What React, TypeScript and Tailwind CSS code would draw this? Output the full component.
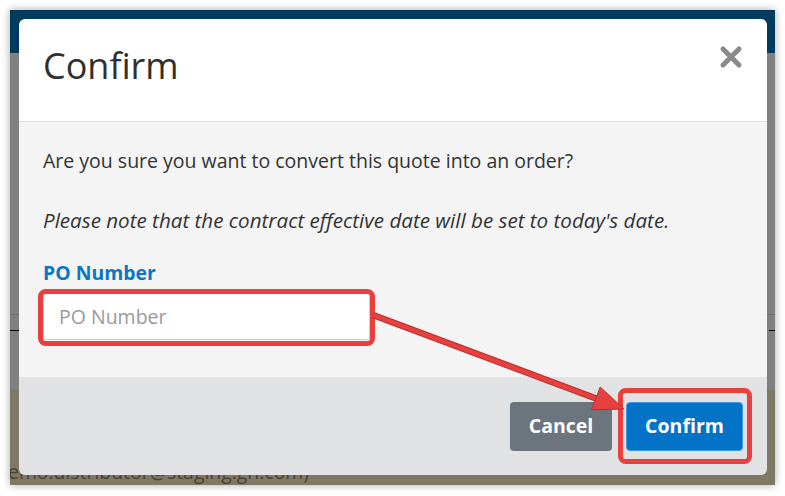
import React from "react";

const font = { fontFamily: '"Open Sans", "Liberation Sans", sans-serif' };

const CloseIcon = () => (
  <svg width="24" height="24" viewBox="0 0 24 24" className="block">
    <path d="M4 4 L20 20 M20 4 L4 20" stroke="#8a8a8a" strokeWidth="5" strokeLinecap="round" />
  </svg>
);

const Annotations = () => (
  <svg width="785" height="496" className="absolute left-0 top-0 pointer-events-none">
    <rect x="40.5" y="291.5" width="332" height="52" rx="5" fill="none" stroke="#e8403f" strokeWidth="5" />
    <rect x="620.5" y="390.5" width="129" height="71" rx="5" fill="none" stroke="#e8403f" strokeWidth="5" />
    <line x1="373" y1="315" x2="600" y2="400" stroke="#b83030" strokeWidth="6.5" />
    <line x1="373" y1="315" x2="600" y2="400" stroke="#e8403f" strokeWidth="4.5" />
    <polygon points="624,409 591.5,409.8 600.2,387" fill="#e8403f" stroke="#b83030" strokeWidth="1" strokeLinejoin="round" />
  </svg>
);

export default function App() {
  return (
    <div className="relative w-[785px] h-[496px] bg-white p-[10px] overflow-hidden" style={font}>
      <div className="relative w-[765px] h-[475px] overflow-hidden flex flex-col shadow-[0_0_8px_rgba(0,0,0,0.35)]">
        <div className="h-[43px] bg-[#003b5d]" />
        <div className="flex-1 bg-[#808080] flex flex-col">
          <div className="h-[261px]" />
          <div className="h-px bg-[#6e6e6e]" />
          <div className="h-[15px]" />
          <div className="flex justify-between">
            <div className="h-px w-[9px] bg-black" />
            <div className="h-px w-[6px] bg-black" />
          </div>
        </div>
        <div className="h-[95px] bg-[#7f7865] pt-[68px]">
          <p className="text-[19.4px] leading-[27px] text-[#4a4230] ml-[-2px] whitespace-nowrap">emo.distributor@staging.gn.com)</p>
        </div>

        <div className="absolute left-[9px] top-[9px] w-[748px] h-[456px] rounded-[6px] overflow-hidden flex flex-col">
          <div className="h-[103px] bg-white border-b border-[#dedee3] flex items-center justify-between pl-[24px] pr-[24px]">
            <h1 className="text-[36px] leading-[43px] text-[#2f2f2f] mt-[-10px]">Confirm</h1>
            <div className="mt-[-26px]">
              <CloseIcon />
            </div>
          </div>
          <div className="h-[255px] bg-[#f4f4f4] px-[24px] pt-[25px]">
            <p className="text-[19.5px] leading-[28px] text-[#333]">Are you sure you want to convert this quote into an order?</p>
            <p className="text-[20.6px] leading-[28px] text-[#333] italic mt-[31px]">Please note that the contract effective date will be set to today's date.</p>
            <p className="text-[19.4px] leading-[28px] font-bold text-[#0b77c4] mt-[25px]">PO Number</p>
            <input
              placeholder="PO Number"
              className="mt-[5px] w-[327px] h-[48px] bg-white border border-[#cfcfcf] rounded-[3px] pl-[15px] text-[19.5px] placeholder:text-[#9a9a9a] outline-none"
            />
          </div>
          <div className="flex-1 bg-[#e1e2e4] flex items-center justify-end gap-[14px] pr-[24px]">
            <button className="w-[102px] h-[49px] rounded-[4px] bg-[#6c757d] text-white font-bold text-[19.5px]">Cancel</button>
            <button className="w-[117px] h-[49px] rounded-[4px] bg-[#0273c7] border border-[#3a98e6] text-white font-bold text-[19.5px]">Confirm</button>
          </div>
        </div>
      </div>
      <Annotations />
    </div>
  );
}
